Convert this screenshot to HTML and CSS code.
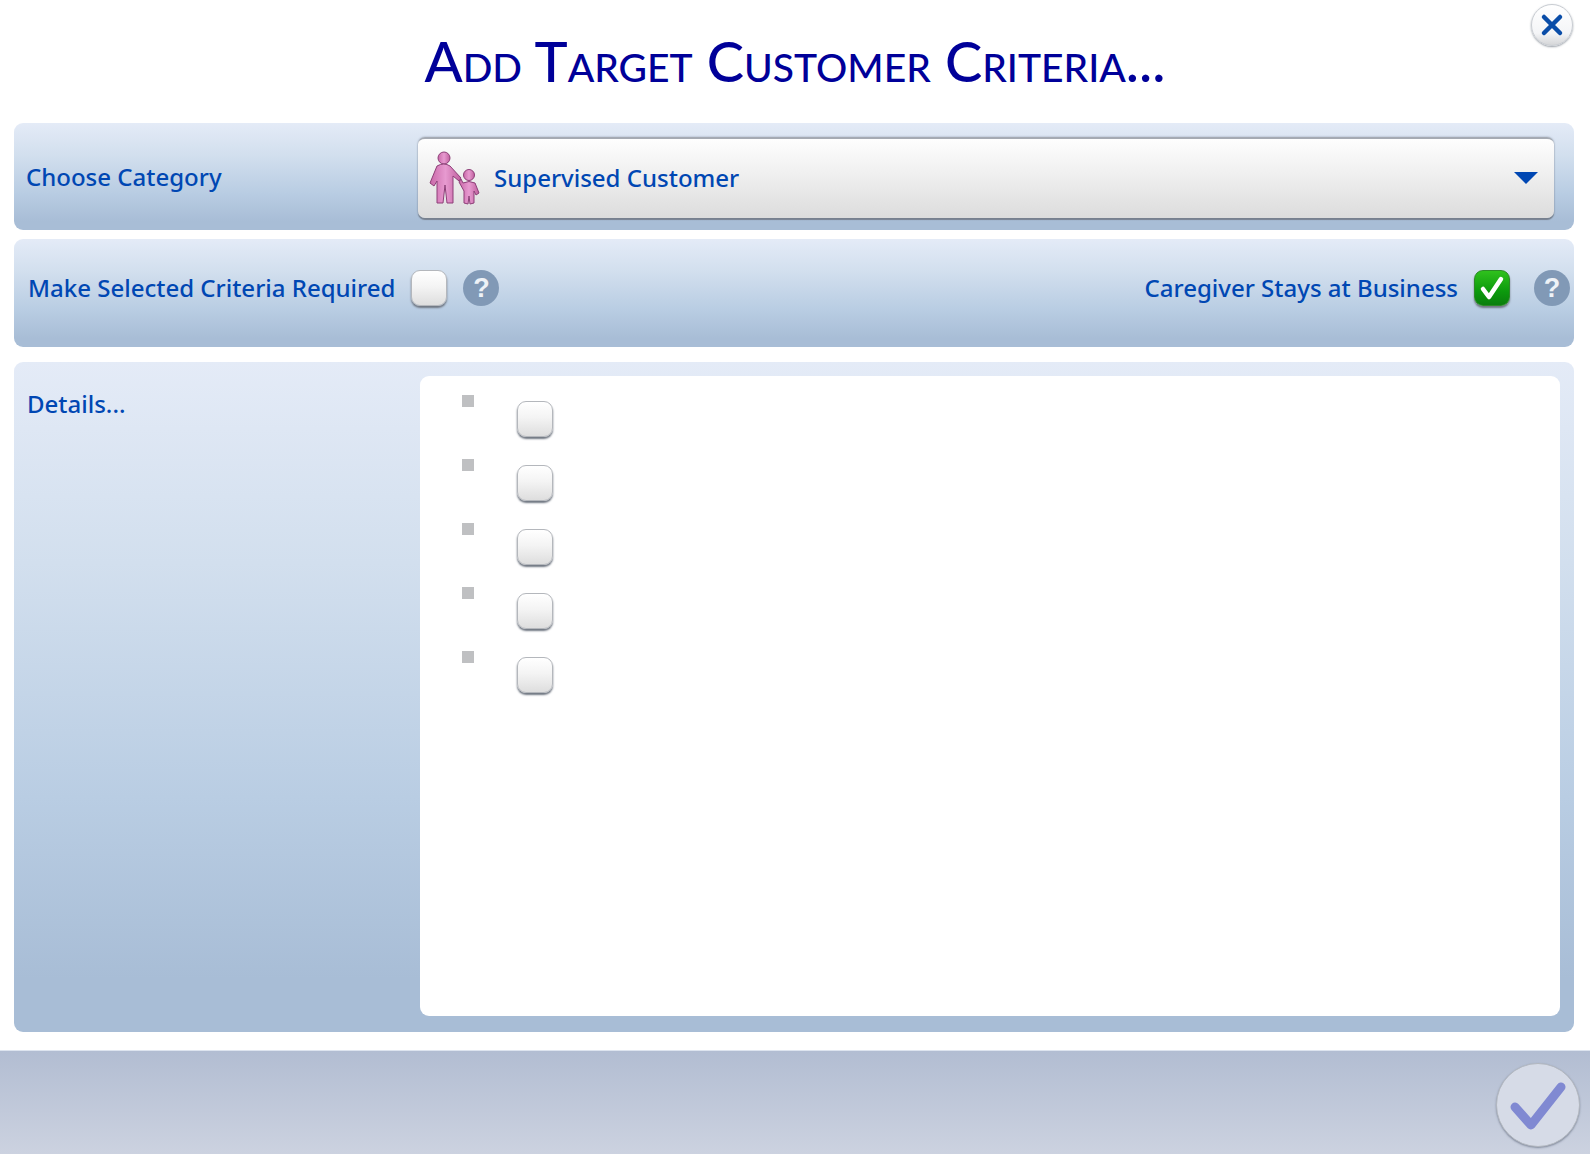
FILE: index.html
```html
<!DOCTYPE html>
<html lang="en">
<head>
<meta charset="utf-8">
<title>Add Target Customer Criteria</title>
<link rel="stylesheet" href="styles.css">
</head>
<body>
<div class="dialog">
  <header class="head">
    <h1 class="title">Add Target Customer Criteria...</h1>
    <button class="close" aria-label="Close">
      <svg viewBox="0 0 40 40" width="40" height="40"><path d="M12 12 L28 28 M28 12 L12 28" stroke="#0a4da8" stroke-width="4.5" stroke-linecap="round"/></svg>
    </button>
  </header>
  <section class="panel category">
    <span class="label cat-label">Choose Category</span>
    <div class="select">
      <svg class="people" viewBox="0 0 52 54" width="52" height="54">
        <defs><linearGradient id="pk" x1="0" y1="0" x2="1" y2="0"><stop offset="0" stop-color="#c968a8"/><stop offset=".5" stop-color="#e79ad0"/><stop offset="1" stop-color="#c05f9e"/></linearGradient></defs>
        <g fill="url(#pk)" stroke="#8d3f78" stroke-width="1">
          <circle cx="16" cy="7" r="6"/>
          <path d="M9 15 Q16 11 22 15 L33 27 L31 30 L25 25 L25 52 L19 52 L17 34 L15 52 L9 52 L9 30 L6 35 L2 32 Z"/>
          <circle cx="41" cy="24" r="5.5"/>
          <path d="M35 32 Q41 29 47 32 L51 42 L48 44 L46 40 L46 52 L42 53 L41 45 L40 53 L36 52 L36 40 L31 31 L33 28 Z"/>
        </g>
      </svg>
      <span class="label sel-text">Supervised Customer</span>
      <svg class="arrow" viewBox="0 0 24 12" width="24" height="12"><path d="M0 0 H24 L12 12 Z" fill="#0047b3"/></svg>
    </div>
  </section>
  <section class="panel options">
    <div class="opt">
      <span class="label">Make Selected Criteria Required</span>
      <span class="check"></span>
      <span class="help">?</span>
    </div>
    <div class="opt">
      <span class="label">Caregiver Stays at Business</span>
      <span class="check on"><svg viewBox="0 0 36 36" width="36" height="36"><path d="M9 19 L15 27 L27 9" fill="none" stroke="#fff" stroke-width="4.5" stroke-linecap="round" stroke-linejoin="round"/></svg></span>
      <span class="help">?</span>
    </div>
  </section>
  <section class="panel details">
    <span class="label det-label">Details...</span>
    <div class="list">
      <div class="row"><span class="bullet"></span><span class="check"></span></div>
      <div class="row"><span class="bullet"></span><span class="check"></span></div>
      <div class="row"><span class="bullet"></span><span class="check"></span></div>
      <div class="row"><span class="bullet"></span><span class="check"></span></div>
      <div class="row"><span class="bullet"></span><span class="check"></span></div>
    </div>
  </section>
  <footer class="foot">
    <button class="ok" aria-label="OK">
      <svg viewBox="0 0 84 84" width="84" height="84"><path d="M19 44 L35 62 L65 24" fill="none" stroke="#8089d2" stroke-width="9" stroke-linecap="round" stroke-linejoin="round"/></svg>
    </button>
  </footer>
</div>
</body>
</html>
```
FILE: styles.css
```css
* { box-sizing: border-box; }
html, body { margin: 0; height: 100%; background: #fff; }
.dialog {
  width: 1590px;
  height: 1154px;
  display: flex;
  flex-direction: column;
  font-family: "Noto Sans", sans-serif;
  overflow: hidden;
}
.head {
  height: 122px;
  position: relative;
  display: flex;
  justify-content: center;
  padding-top: 27px;
}
.title {
  margin: 0;
  color: #000099;
  font-family: "Lato", sans-serif;
  font-weight: 500;
  font-variant: small-caps;
  font-size: 56px;
  line-height: 68px;
  height: 68px;
  white-space: nowrap;
}
.close {
  position: absolute;
  right: 17px;
  top: 4px;
  width: 42px;
  height: 42px;
  padding: 0;
  border: 1px solid #c8ccd2;
  border-radius: 50%;
  background: linear-gradient(#ffffff, #f4f5f7 70%, #d5d6d8);
  box-shadow: 0 1px 2px rgba(70, 80, 95, .55);
  display: flex;
  align-items: center;
  justify-content: center;
}
.panel {
  margin: 0 16px 0 14px;
  border-radius: 9px;
  background: linear-gradient(#e4ebf7, #d2dfee 30%, #b9cde3 65%, #a8bdd6 92%);
}
.label {
  color: #0047b3;
  font-size: 24px;
  font-weight: 500;
  line-height: 32px;
  white-space: nowrap;
}
.category {
  height: 108px;
  display: flex;
  align-items: center;
  padding: 0 20px 0 12px;
  margin-top: 1px;
}
.cat-label { width: 392px; }
.select {
  flex: 1;
  height: 81px;
  margin-top: 1px;
  display: flex;
  align-items: center;
  padding: 0 16px 0 10px;
  border-top: 2px solid #a5aab3;
  border-radius: 7px;
  background: linear-gradient(#fefefe, #f1f1f1 40%, #dcdcdc);
  box-shadow: 0 2px 1px #77808e, 0 0 2px rgba(90, 100, 120, .6);
}
.people { flex: none; }
.sel-text { margin-left: 14px; flex: 1; }
.arrow { flex: none; }
.options {
  height: 108px;
  margin-top: 9px;
  display: flex;
  justify-content: space-between;
  align-items: flex-start;
  padding: 30px 4px 0 14px;
}
.opt { display: flex; align-items: center; height: 37px; }
.check {
  flex: none;
  display: block;
  width: 36px;
  height: 36px;
  border-radius: 9px;
  border: 1px solid #b4b7bc;
  background: linear-gradient(#ffffff, #f4f4f4 45%, #dedede);
  box-shadow: 0 2px 2px #6f7681;
}
.check.on {
  background: linear-gradient(#2fc11d, #0c9a0d 60%, #0a7e0d);
  border-color: #2c8a27;
}
.check.on svg { display: block; margin: -1px; }
.opt .check { margin-left: 16px; }
.help {
  flex: none;
  width: 36px;
  height: 36px;
  margin-left: 16px;
  border-radius: 50%;
  background: #8199b6;
  color: #eef2f7;
  font-family: "Liberation Sans", sans-serif;
  font-weight: 700;
  font-size: 27px;
  line-height: 36px;
  text-align: center;
}
.opt:last-child .help { margin-left: 24px; }
.details {
  height: 670px;
  margin-top: 15px;
  display: flex;
  align-items: flex-start;
  padding: 14px 14px 16px 13px;
}
.det-label { width: 393px; margin-top: 12px; }
.list {
  flex: 1;
  height: 640px;
  background: #fff;
  border-radius: 9px;
  padding: 19px 0 0 42px;
}
.row { height: 64px; display: flex; align-items: flex-start; }
.bullet { width: 12px; height: 12px; background: #bfc0c2; }
.row .check { margin: 6px 0 0 43px; }
.foot {
  height: 104px;
  margin-top: 18px;
  border-top: 1px solid #dde4ef;
  background: linear-gradient(#b2bdd2, #ccd2e0);
  position: relative;
}
.ok {
  position: absolute;
  right: 10px;
  top: 12px;
  width: 84px;
  height: 84px;
  padding: 0;
  border: 1px solid #b3b8c0;
  border-radius: 50%;
  background: #d6dbe7;
  box-shadow: 0 1px 2px rgba(80, 90, 110, .6);
}
.ok svg { display: block; margin: -1px; }
```
